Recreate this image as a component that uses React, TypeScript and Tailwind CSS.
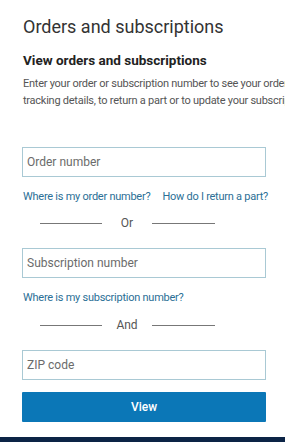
import React from "react";

function Divider({ label }: { label: string }) {
  return (
    <div className="flex items-center h-[16px] ml-[18px]">
      <div className="w-[62px] h-px bg-[#777]" />
      <div className="w-[50px] text-center text-[12px] leading-[16px] text-[#555]">{label}</div>
      <div className="w-[63px] h-px bg-[#777]" />
    </div>
  );
}

function Field({ placeholder }: { placeholder: string }) {
  return (
    <input
      placeholder={placeholder}
      className="block w-[244px] h-[30px] border border-[#a9c9d4] bg-white px-[4px] text-[12px] text-[#333] placeholder:text-[#6b6b6b] outline-none"
    />
  );
}

export default function App() {
  return (
    <div className="w-[285px] h-[442px] overflow-hidden bg-white flex flex-col" style={{ fontFamily: "Roboto, 'Liberation Sans', sans-serif" }}>
      <div className="pl-[22px] flex flex-col flex-1">
        <h1 className="pt-[15px] pl-px text-[18px] leading-[24px] text-[#333] font-normal">Orders and subscriptions</h1>
        <h2 className="mt-[12px] pl-px text-[13.5px] leading-[18px] font-bold text-[#222]">View orders and subscriptions</h2>
        <p className="mt-[6px] pl-px text-[11px] leading-[17px] tracking-[-0.25px] text-[#555] whitespace-nowrap">
          Enter your order or subscription number to see your order
          <br />
          tracking details, to return a part or to update your subscription
        </p>
        <div className="mt-[38px]">
          <Field placeholder="Order number" />
        </div>
        <div className="mt-[11px] pl-px flex gap-[12px] text-[11px] leading-[17px] tracking-[-0.25px] text-[#2b6f96]">
          <a>Where is my order number?</a>
          <a>How do I return a part?</a>
        </div>
        <div className="mt-[10px]">
          <Divider label="Or" />
        </div>
        <div className="mt-[17px]">
          <Field placeholder="Subscription number" />
        </div>
        <div className="mt-[11px] pl-px text-[11px] leading-[17px] tracking-[-0.25px] text-[#2b6f96]">
          <a>Where is my subscription number?</a>
        </div>
        <div className="mt-[11px]">
          <Divider label="And" />
        </div>
        <div className="mt-[17px]">
          <Field placeholder="ZIP code" />
        </div>
        <button className="mt-[12px] w-[244px] h-[30px] bg-[#0b77b7] text-white text-[12px] font-medium rounded-[1px]">
          View
        </button>
      </div>
      <div className="h-[5px] bg-[#0c2446]" />
    </div>
  );
}
